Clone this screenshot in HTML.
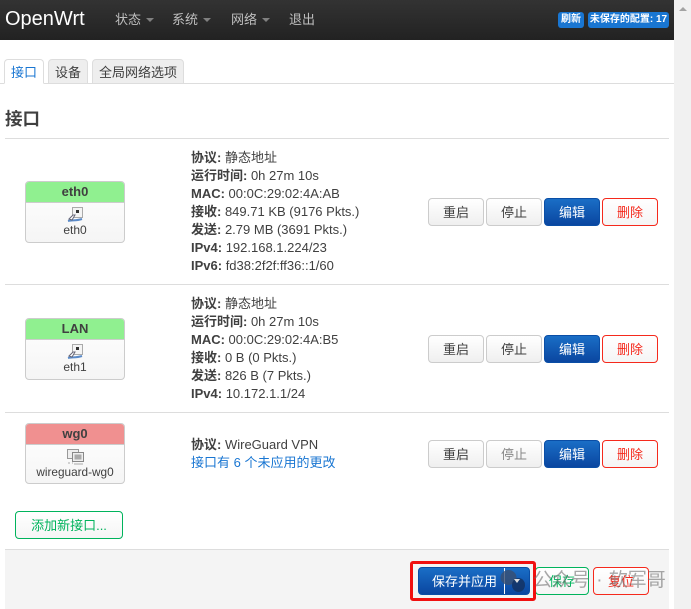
<!DOCTYPE html>
<html lang="zh"><head><meta charset="utf-8"><title>OpenWrt</title>
<style>
*{box-sizing:border-box}
html,body{margin:0;padding:0;width:691px;height:609px;overflow:hidden;background:#fff}
body{position:relative;font-family:"Liberation Sans","Noto Sans CJK SC",sans-serif;font-size:13px;color:#404040}
.a{position:absolute;white-space:nowrap}
#hdr{left:0;top:0;width:674px;height:40px;background:linear-gradient(#333,#222)}
.nav{top:0;height:40px;line-height:40px;color:#bfbfbf;font-size:13px}
.car{display:inline-block;width:0;height:0;border:4px solid transparent;border-top-color:#808080;border-bottom:0;margin-left:5px;vertical-align:2px}
.lab{background:#1976d2;color:#fff;font-weight:bold;font-size:10px;height:16px;line-height:16px;border-radius:3px;text-align:center;top:12px}
.tab{top:59px;height:25px;line-height:26px;text-align:center;background:#eee;border:1px solid #ddd;border-radius:4px 4px 0 0;font-size:13px;color:#404040}
.ln{height:1px;background:#ddd}
.box{left:25px;width:100px;border:1px solid #ccc;border-radius:4px;background:linear-gradient(#fff,#f5f5f5);overflow:hidden;text-align:center;font-size:12px}
.box b{display:block;height:21px;line-height:20px;font-size:13px;border-bottom:1px solid #ccc;color:#404040}
.box svg{display:block;margin:4px auto 0}
.box span{display:block;line-height:14px;color:#404040}
.info{left:191px;line-height:18px;font-size:13px;color:#404040}
.btn{height:28px;line-height:27px;width:56px;text-align:center;border:1px solid #ccc;border-radius:4px;background:linear-gradient(#fff,#efefef);font-size:13px;color:#404040}
.gr{color:#888}
.bl{background:linear-gradient(#1a6ec6,#0a46a0);border-color:#0a4ea6;color:#fff}
.rd{border-color:#f5291c;color:#f5291c;background:linear-gradient(#fff,#f5f5f5)}
.gn{border-color:#00b35c;color:#00b35c;background:linear-gradient(#fff,#f5f5f5)}
</style></head><body>
<div class="a" id="hdr"></div>
<div class="a" style="left:5px;top:0;height:40px;line-height:38px;font-size:20px;color:#fff">OpenWrt</div>
<div class="a nav" style="left:115px">状态<i class="car"></i></div>
<div class="a nav" style="left:172px">系统<i class="car"></i></div>
<div class="a nav" style="left:231px">网络<i class="car"></i></div>
<div class="a nav" style="left:289px">退出</div>
<div class="a lab" style="left:558px;width:26px">刷新</div>
<div class="a lab" style="left:588px;width:81px">未保存的配置: 17</div>

<div class="a" style="left:674px;top:0;width:17px;height:609px;background:#f1f1f1"></div>
<div class="a" style="left:679px;top:7px;width:0;height:0;border:4px solid transparent;border-top:0;border-bottom:4px solid #a3a3a3"></div>

<div class="a ln" style="left:0;top:83px;width:674px"></div>
<div class="a tab" style="left:4px;width:40px;background:#fff;border-bottom-color:#fff;color:#1976d2">接口</div>
<div class="a tab" style="left:48px;width:40px">设备</div>
<div class="a tab" style="left:92px;width:92px">全局网络选项</div>

<div class="a" style="left:5px;top:107px;font-size:17.5px;line-height:25px;font-weight:bold;color:#404040">接口</div>
<div class="a ln" style="left:5px;top:138px;width:664px"></div>
<div class="a ln" style="left:5px;top:284px;width:664px"></div>
<div class="a ln" style="left:5px;top:412px;width:664px"></div>

<div class="a box" style="top:181px;height:62px"><b style="background:#90f090">eth0</b>
<svg width="16" height="16" viewBox="0 0 16 16"><rect x="5.500" y="0.500" width="10" height="10" fill="#f4f4f4" stroke="#aaa"/><rect x="9" y="3" width="3" height="3" fill="#333"/><path d="M1 14C5 13 9 14 15 12" stroke="#5a8ac8" stroke-width="2" fill="none"/><path d="M2 12l4-4h2l-3 5z" fill="#fff" stroke="#667" stroke-width="1"/></svg>
<span>eth0</span></div>
<div class="a box" style="top:318px;height:62px"><b style="background:#90f090">LAN</b>
<svg width="16" height="16" viewBox="0 0 16 16"><rect x="5.500" y="0.500" width="10" height="10" fill="#f4f4f4" stroke="#aaa"/><rect x="9" y="3" width="3" height="3" fill="#333"/><path d="M1 14C5 13 9 14 15 12" stroke="#5a8ac8" stroke-width="2" fill="none"/><path d="M2 12l4-4h2l-3 5z" fill="#fff" stroke="#667" stroke-width="1"/></svg>
<span>eth1</span></div>
<div class="a box" style="top:423px;height:61px"><b style="background:#f09090">wg0</b>
<svg width="17" height="16" viewBox="0 0 17 16"><rect x="0.500" y="0.500" width="11" height="9" fill="#eee" stroke="#999"/><rect x="5.500" y="3.500" width="11" height="9" fill="#eee" stroke="#888"/><rect x="7.500" y="5.500" width="7" height="5" fill="#aaa"/><path d="M1 14h2M5 14h1M7 15h9" stroke="#aaa"/></svg>
<span style="font-size:11.8px">wireguard-wg0</span></div>

<div class="a info" style="top:149px"><b>协议:</b> 静态地址<br><b>运行时间:</b> 0h 27m 10s<br><b>MAC:</b> 00:0C:29:02:4A:AB<br><b>接收:</b> 849.71 KB (9176 Pkts.)<br><b>发送:</b> 2.79 MB (3691 Pkts.)<br><b>IPv4:</b> 192.168.1.224/23<br><b>IPv6:</b> fd38:2f2f:ff36::1/60</div>
<div class="a info" style="top:295px"><b>协议:</b> 静态地址<br><b>运行时间:</b> 0h 27m 10s<br><b>MAC:</b> 00:0C:29:02:4A:B5<br><b>接收:</b> 0 B (0 Pkts.)<br><b>发送:</b> 826 B (7 Pkts.)<br><b>IPv4:</b> 10.172.1.1/24</div>
<div class="a info" style="top:436px"><b>协议:</b> WireGuard VPN<br><span style="color:#1976d2">接口有 6 个未应用的更改</span></div>

<div class="a btn" style="left:428px;top:198px">重启</div><div class="a btn" style="left:486px;top:198px">停止</div><div class="a btn bl" style="left:544px;top:198px">编辑</div><div class="a btn rd" style="left:602px;top:198px">删除</div>
<div class="a btn" style="left:428px;top:335px">重启</div><div class="a btn" style="left:486px;top:335px">停止</div><div class="a btn bl" style="left:544px;top:335px">编辑</div><div class="a btn rd" style="left:602px;top:335px">删除</div>
<div class="a btn" style="left:428px;top:440px">重启</div><div class="a btn gr" style="left:486px;top:440px">停止</div><div class="a btn bl" style="left:544px;top:440px">编辑</div><div class="a btn rd" style="left:602px;top:440px">删除</div>

<div class="a btn gn" style="left:15px;top:511px;width:108px">添加新接口...</div>

<div class="a" style="left:5px;top:549px;width:664px;height:60px;background:#f4f4f4;border-top:1px solid #ddd"></div>
<div class="a btn gn" style="left:535px;top:567px;width:54px">保存</div>
<div class="a btn rd" style="left:593px;top:567px;width:56px">复位</div>
<div class="a btn bl" style="left:418px;top:567px;width:112px;text-align:left;padding-left:13px">保存并应用</div>
<div class="a" style="left:504px;top:568px;width:1px;height:26px;background:#fff"></div>
<svg class="a" style="left:499px;top:568px" width="30" height="26" viewBox="0 0 30 26"><ellipse cx="9.500" cy="9.500" rx="8" ry="7.500" fill="#3a4f70" opacity=".8"/><ellipse cx="19.500" cy="17" rx="6.500" ry="7" fill="#143263" opacity=".85"/></svg>
<div class="a" style="left:514px;top:579px;width:0;height:0;border:3px solid transparent;border-top:4px solid #ddd;border-bottom:0"></div>
<div class="a" style="left:410px;top:561px;width:126px;height:40px;border:3px solid #f01010;border-radius:3px"></div>
<div class="a" style="left:533px;top:568px;font-size:19px;line-height:26px;word-spacing:1px;color:rgba(110,110,110,.6)">公众号 · 软军哥</div>
</body></html>
